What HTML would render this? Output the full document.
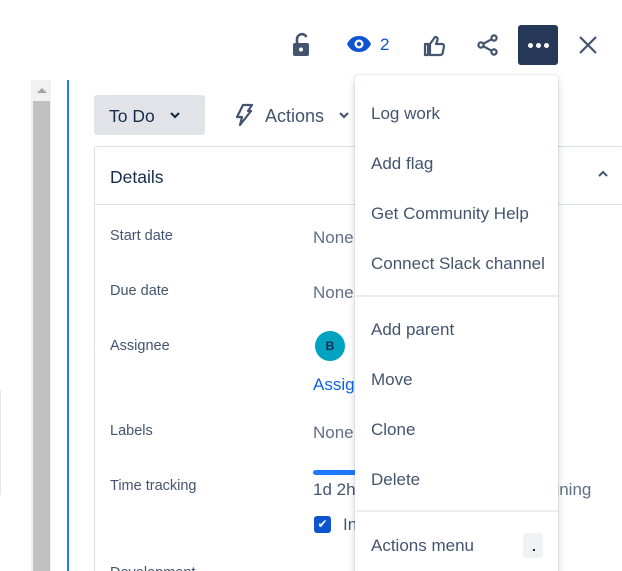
<!DOCTYPE html>
<html style="height:571px;overflow:hidden"><head><style>
*{margin:0;padding:0;box-sizing:border-box}
body{width:622px;height:571px;overflow:hidden;background:#fff;font-family:"Liberation Sans",sans-serif;position:relative;color:#172b4d}
.a{position:absolute}
.lbl{position:absolute;left:110px;font-size:14.5px;color:#44546f}
.val{position:absolute;left:313px;font-size:17px;color:#626f86}
.mi{position:absolute;left:371px;font-size:17px;color:#44546f}
</style></head><body>
<div class="a" style="left:31px;top:80px;width:20px;height:491px;background:#f1f1f1"></div>
<div class="a" style="left:33px;top:101px;width:17px;height:470px;background:#c1c1c1"></div>
<div class="a" style="left:37px;top:88px;width:0;height:0;border-left:5px solid transparent;border-right:5px solid transparent;border-bottom:5px solid #a3a3a3"></div>
<div class="a" style="left:0;top:390px;width:1px;height:105px;background:#e6e6e6"></div>
<div class="a" style="left:67px;top:80px;width:2px;height:491px;background:#1d7afc"></div>
<svg class="a" style="left:290px;top:32px" width="24" height="26" viewBox="0 0 24 26"><path d="M7 11V7a5 5 0 0 1 9.5-2" fill="none" stroke="#44546f" stroke-width="2.6"/><rect x="3" y="11" width="16" height="13" rx="2" fill="#44546f"/><circle cx="11" cy="17.5" r="2" fill="#fff"/></svg>
<svg class="a" style="left:346px;top:35px" width="26" height="18" viewBox="0 0 26 18"><path d="M1 9C4 3 8 1 13 1s9 2 12 8c-3 6-7 8-12 8S4 15 1 9z" fill="#0c55cf"/><circle cx="13" cy="9" r="4.5" fill="#fff"/><circle cx="13" cy="9" r="2.2" fill="#0c55cf"/></svg>
<div class="a" style="left:380px;top:35px;font-size:17px;color:#0c55cf">2</div>
<svg class="a" style="left:423px;top:34px" width="24" height="24" viewBox="0 0 24 24"><path d="M2 10h3v11H2zM7 21V10l5-7c2 0 3 1 2.5 3L13 10h6a2 2 0 0 1 2 2.3l-1.3 6.7A2.5 2.5 0 0 1 17.2 21z" fill="none" stroke="#44546f" stroke-width="2.2" stroke-linejoin="round"/></svg>
<svg class="a" style="left:476px;top:33px" width="24" height="24" viewBox="0 0 24 24"><circle cx="18" cy="5" r="2.6" fill="none" stroke="#44546f" stroke-width="2.2"/><circle cx="5" cy="12" r="2.6" fill="none" stroke="#44546f" stroke-width="2.2"/><circle cx="18" cy="19" r="2.6" fill="none" stroke="#44546f" stroke-width="2.2"/><path d="M7.5 10.6l8-4.3M7.5 13.4l8 4.3" stroke="#44546f" stroke-width="2.2"/></svg>
<div class="a" style="left:518px;top:25px;width:40px;height:40px;border-radius:3px;background:#253858"></div>
<div class="a" style="left:528px;top:43px;width:5px;height:5px;border-radius:50%;background:#fff;box-shadow:8px 0 #fff,16px 0 #fff"></div>
<svg class="a" style="left:577px;top:34px" width="22" height="22" viewBox="0 0 22 22"><path d="M3 3l16 16M19 3L3 19" stroke="#44546f" stroke-width="2.2"/></svg>
<div class="a" style="left:94px;top:95px;width:111px;height:40px;border-radius:3px;background:#e1e3e8"></div>
<div class="a" style="left:109px;top:106px;font-size:17.5px;color:#172b4d">To Do</div>
<svg class="a" style="left:169px;top:110px" width="12" height="10" viewBox="0 0 12 10"><path d="M2 3l4 4 4-4" fill="none" stroke="#172b4d" stroke-width="2.2"/></svg>
<svg class="a" style="left:234px;top:103px" width="20" height="24" viewBox="0 0 20 24"><path d="M9 2h9l-4 6h3L6 22l2-8H3z" fill="none" stroke="#44546f" stroke-width="2.2" stroke-linejoin="round"/></svg>
<div class="a" style="left:265px;top:106px;font-size:18px;color:#44546f">Actions</div>
<svg class="a" style="left:338px;top:110px" width="12" height="10" viewBox="0 0 12 10"><path d="M2 3l4 4 4-4" fill="none" stroke="#44546f" stroke-width="2.2"/></svg>
<div class="a" style="left:94px;top:146px;width:530px;height:440px;border:1px solid #dcdfe4;border-radius:3px"></div>
<div class="a" style="left:94px;top:204px;width:530px;height:1px;background:#dcdfe4"></div>
<div class="a" style="left:110px;top:167px;font-size:17.5px;color:#172b4d">Details</div>
<svg class="a" style="left:597px;top:169px" width="12" height="10" viewBox="0 0 12 10"><path d="M2 7l4-4 4 4" fill="none" stroke="#44546f" stroke-width="2"/></svg>
<div class="lbl" style="top:228px">Start date</div><div class="val" style="top:228px">None</div>
<div class="lbl" style="top:283px">Due date</div><div class="val" style="top:283px">None</div>
<div class="lbl" style="top:338px">Assignee</div>
<div class="a" style="left:315px;top:331px;width:30px;height:30px;border-radius:50%;background:#00a3bf;color:#172b4d;font-size:12px;font-weight:bold;text-align:center;line-height:30px">B</div>
<div class="val" style="top:375px;color:#0c66e4">Assign</div>
<div class="lbl" style="top:423px">Labels</div><div class="val" style="top:423px">None</div>
<div class="lbl" style="top:478px">Time tracking</div>
<div class="a" style="left:313px;top:470px;width:50px;height:5px;border-radius:3px;background:#1d7afc"></div>
<div class="val" style="top:480px;color:#44546f">1d 2h</div>
<div class="a" style="left:546px;top:480px;font-size:17px;color:#626f86">aining</div>
<div class="a" style="left:314px;top:516px;width:17px;height:17px;border-radius:3px;background:#0c55cf;color:#fff;font-size:12px;text-align:center;line-height:17px">✔</div>
<div class="a" style="left:343px;top:515px;font-size:17px;color:#44546f">In</div>
<div class="lbl" style="top:565px">Development</div>
<div class="a" style="left:355px;top:75px;width:203px;height:510px;background:#fff;border-radius:3px;box-shadow:0 0 1px rgba(9,30,66,.35),0 4px 8px rgba(9,30,66,.2)"></div>
<div class="mi" style="top:104px">Log work</div>
<div class="mi" style="top:154px">Add flag</div>
<div class="mi" style="top:204px">Get Community Help</div>
<div class="mi" style="top:254px">Connect Slack channel</div>
<div class="a" style="left:356px;top:295px;width:202px;height:2px;background:#ebecf0"></div>
<div class="mi" style="top:320px">Add parent</div>
<div class="mi" style="top:370px">Move</div>
<div class="mi" style="top:420px">Clone</div>
<div class="mi" style="top:470px">Delete</div>
<div class="a" style="left:356px;top:510px;width:202px;height:2px;background:#ebecf0"></div>
<div class="mi" style="top:536px">Actions menu</div>
<div class="a" style="left:523px;top:533px;width:20px;height:25px;border-radius:3px;background:#f1f2f4"></div>
<div class="a" style="left:533px;top:549px;width:2px;height:2px;background:#172b4d"></div>
</body></html>
